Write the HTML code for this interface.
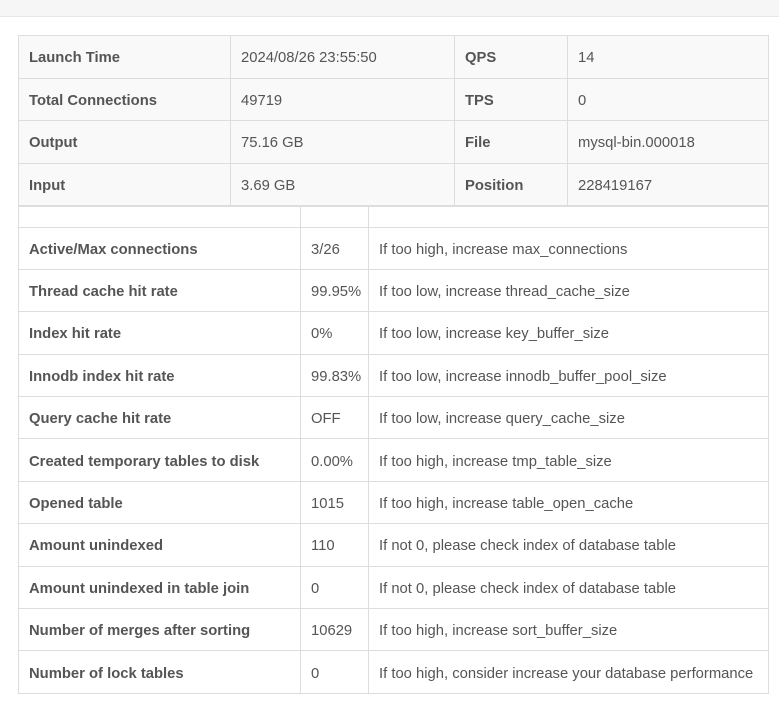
<!DOCTYPE html>
<html><head><style>
body{margin:0;background:#fff;font-family:"Liberation Sans",sans-serif;font-size:14.8px;color:#555;width:779px;height:713px;overflow:hidden;position:relative}
.top{position:absolute;left:0;top:0;width:779px;height:16px;background:#f6f6f6;border-bottom:1px solid #e8e8e8}
table{position:absolute;left:18px;border-collapse:collapse;table-layout:fixed}
td{border:1px solid #ddd;padding:3px 0 0 10px;white-space:nowrap;overflow:hidden;box-sizing:border-box}
td.b{font-weight:bold}
#t1{top:35px;width:750px;background:#f9f9f9}
#t1 td{height:42.5px}
#t1 tr:last-child td{border-bottom:2px solid #ddd}
#t2{top:206px;width:750px}
#t2 td{height:42.4px}
#t2 tr.h td{height:21px;border-top:none;padding:0}
</style></head><body>
<div class="top"></div>
<table id="t1">
<colgroup><col style="width:212px"><col style="width:224px"><col style="width:113px"><col style="width:201px"></colgroup>
<tr><td class="b">Launch Time</td><td>2024/08/26 23:55:50</td><td class="b">QPS</td><td>14</td></tr>
<tr><td class="b">Total Connections</td><td>49719</td><td class="b">TPS</td><td>0</td></tr>
<tr><td class="b">Output</td><td>75.16 GB</td><td class="b">File</td><td>mysql-bin.000018</td></tr>
<tr><td class="b">Input</td><td>3.69 GB</td><td class="b">Position</td><td>228419167</td></tr>
</table>
<table id="t2">
<colgroup><col style="width:282px"><col style="width:68px"><col style="width:400px"></colgroup>
<tr class="h"><td></td><td></td><td></td></tr>
<tr><td class="b">Active/Max connections</td><td>3/26</td><td>If too high, increase max_connections</td></tr>
<tr><td class="b">Thread cache hit rate</td><td>99.95%</td><td>If too low, increase thread_cache_size</td></tr>
<tr><td class="b">Index hit rate</td><td>0%</td><td>If too low, increase key_buffer_size</td></tr>
<tr><td class="b">Innodb index hit rate</td><td>99.83%</td><td>If too low, increase innodb_buffer_pool_size</td></tr>
<tr><td class="b">Query cache hit rate</td><td>OFF</td><td>If too low, increase query_cache_size</td></tr>
<tr><td class="b">Created temporary tables to disk</td><td>0.00%</td><td>If too high, increase tmp_table_size</td></tr>
<tr><td class="b">Opened table</td><td>1015</td><td>If too high, increase table_open_cache</td></tr>
<tr><td class="b">Amount unindexed</td><td>110</td><td>If not 0, please check index of database table</td></tr>
<tr><td class="b">Amount unindexed in table join</td><td>0</td><td>If not 0, please check index of database table</td></tr>
<tr><td class="b">Number of merges after sorting</td><td>10629</td><td>If too high, increase sort_buffer_size</td></tr>
<tr><td class="b">Number of lock tables</td><td>0</td><td>If too high, consider increase your database performance</td></tr>
</table>
</body></html>
